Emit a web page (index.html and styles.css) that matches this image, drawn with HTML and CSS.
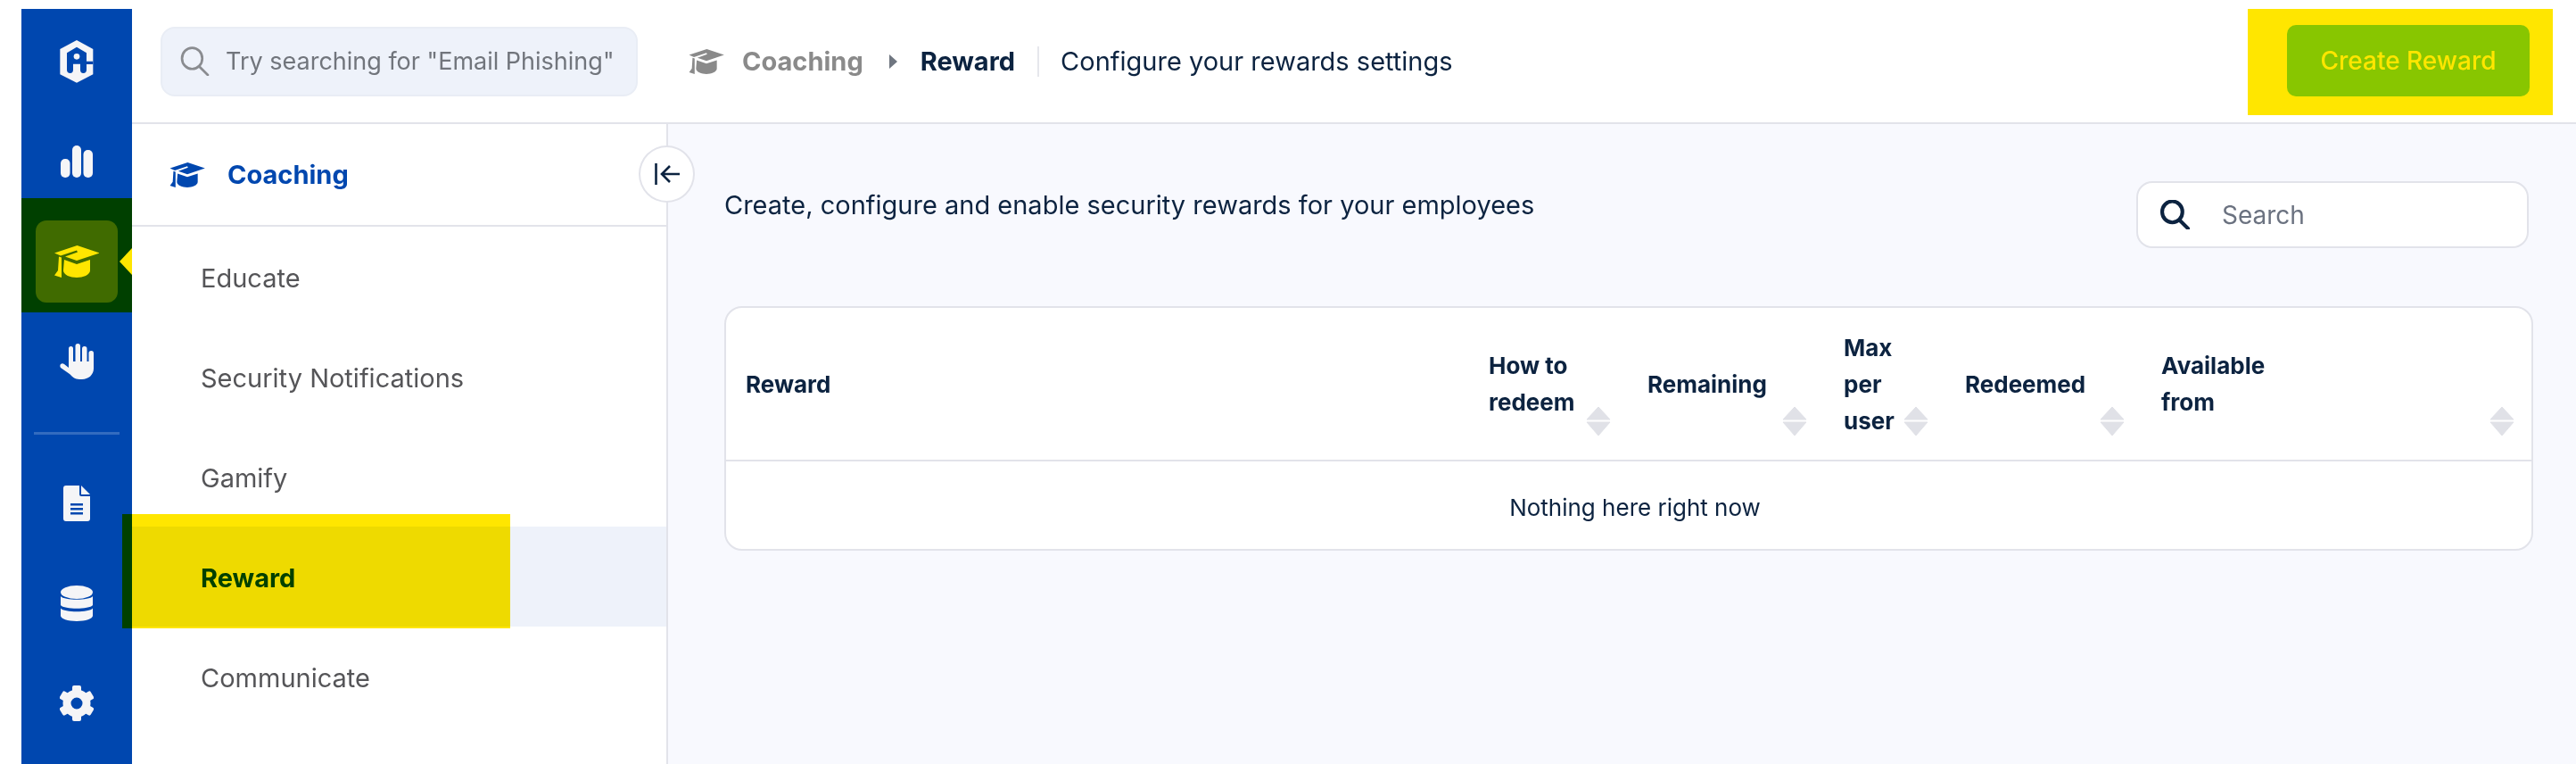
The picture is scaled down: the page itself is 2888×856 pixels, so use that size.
FILE: index.html
```html
<!DOCTYPE html>
<html lang="en">
<head>
    <title>Coaching - Reward</title>
    <link rel="stylesheet" href="styles.css">
</head>
<body>
    <svg class="sprites" width="0" height="0">
        <symbol id="cap" viewBox="0 0 50 36">
            <path d="M25.5 0 L50.5 8.5 L25 17 L12 12.5 L26 7.5 L25 5.5 L7 11.5 L0 8.5Z"/>
            <path d="M11 16 L25 21 L40 16 V28 C40 33 32 36 25 36 C18 36 10 33 10 28Z"/>
            <path d="M5 12.5 L8 13.5 V36 L0 33.5 L4 28Z"/>
        </symbol>
        <symbol id="magnifier" viewBox="0 0 32 32">
            <ellipse cx="13" cy="13" rx="11" ry="11.5" fill="none" stroke="currentColor" stroke-width="inherit"/>
            <line x1="21" y1="22" x2="30" y2="31" stroke="currentColor" stroke-width="inherit" stroke-linecap="round"/>
        </symbol>
    </svg>

    <nav class="rail">
        <a class="rail-item">
            <svg class="icon-logo" viewBox="197 135 112 144">
                <path fill="#f5f5f7" d="M253 135 L308 165 V250 L253 278 L197 250 V165Z"/>
                <path fill="#0047af" d="M220 178 L253 158 L286 178 V206 H308 V216 H286 V235 Q286 246 275 246 Q265 246 265 235 V215 H241 V235 Q241 246 231 246 Q220 246 220 235Z"/>
                <circle fill="#f5f5f7" cx="253" cy="190" r="10"/>
            </svg>
        </a>
        <a class="rail-item">
            <svg class="icon-chart" viewBox="0 0 36 36">
                <rect x="0" y="15" width="10.5" height="21" rx="5"/>
                <rect x="13" y="0" width="10" height="36" rx="5"/>
                <rect x="25.5" y="5" width="10.5" height="31" rx="5"/>
            </svg>
        </a>
        <a class="rail-item rail-item-active">
            <span class="rail-tile"><svg class="icon-cap"><use href="#cap"/></svg></span>
            <span class="rail-arrow"></span>
        </a>
        <a class="rail-item">
            <svg class="icon-hand" viewBox="0 0 38 40">
                <rect x="10" y="3" width="5" height="24" rx="2.5"/>
                <rect x="17.5" y="0" width="5.5" height="24" rx="2.7"/>
                <rect x="25" y="3" width="5.5" height="22" rx="2.7"/>
                <rect x="32.5" y="8" width="5.5" height="20" rx="2.7"/>
                <path d="M10 20 H38 V28 C38 35 32 40 25 40 H22 C17 40 14 37 11 34 L1 27 C-1 24 2 21 5 23 L10 27Z"/>
            </svg>
        </a>
        <div class="rail-divider"></div>
        <a class="rail-item">
            <svg class="icon-doc" viewBox="0 0 30 40">
                <path d="M3 0 H18 V10 a2 2 0 0 0 2 2 H30 V37 a3 3 0 0 1 -3 3 H3 a3 3 0 0 1 -3 -3 V3 a3 3 0 0 1 3 -3Z"/>
                <path d="M20 0 L30 10 H20Z"/>
                <rect class="cut" x="8" y="20" width="14" height="2.5"/>
                <rect class="cut" x="8" y="25" width="14" height="2.5"/>
                <rect class="cut" x="8" y="30" width="14" height="2.5"/>
            </svg>
        </a>
        <a class="rail-item">
            <svg class="icon-db" viewBox="0 0 36 40">
                <ellipse cx="18" cy="7.5" rx="18" ry="7.5"/>
                <path d="M0 12 C4 17 32 17 36 12 V22 C32 27 4 27 0 22Z"/>
                <path d="M0 25.5 C4 30.5 32 30.5 36 25.5 V34 C36 37 28 40 18 40 C8 40 0 37 0 34Z"/>
            </svg>
        </a>
        <a class="rail-item">
            <svg class="icon-gear" viewBox="0 0 38 40">
                <circle cx="19" cy="20" r="11" fill="none" stroke="#f5f5f7" stroke-width="9"/>
                <rect x="14" y="0" width="10" height="9" rx="2"/>
                <rect x="14" y="0" width="10" height="9" rx="2" transform="rotate(60 19 20)"/>
                <rect x="14" y="0" width="10" height="9" rx="2" transform="rotate(120 19 20)"/>
                <rect x="14" y="0" width="10" height="9" rx="2" transform="rotate(180 19 20)"/>
                <rect x="14" y="0" width="10" height="9" rx="2" transform="rotate(240 19 20)"/>
                <rect x="14" y="0" width="10" height="9" rx="2" transform="rotate(300 19 20)"/>
            </svg>
        </a>
    </nav>

    <div class="page">
        <header class="topbar">
            <div class="global-search">
                <svg class="search-icon-light"><use href="#magnifier"/></svg>
                <span>Try searching for "Email Phishing"</span>
            </div>
            <div class="crumbs">
                <svg class="crumb-cap"><use href="#cap"/></svg>
                <span class="crumb-parent">Coaching</span>
                <svg class="crumb-arrow" viewBox="0 0 10 16"><path d="M1 0 L10 8 L1 16Z"/></svg>
                <span class="crumb-current">Reward</span>
                <span class="crumb-desc">Configure your rewards settings</span>
            </div>
            <div class="create-mark">
                <button class="create-btn">Create Reward</button>
            </div>
        </header>

        <div class="body-row">
            <aside class="sidebar">
                <div class="sidebar-title">
                    <svg class="sidebar-cap"><use href="#cap"/></svg>
                    <span>Coaching</span>
                </div>
                <a class="side-link">Educate</a>
                <a class="side-link">Security Notifications</a>
                <a class="side-link">Gamify</a>
                <a class="side-link side-link-active">Reward</a>
                <a class="side-link">Communicate</a>
                <button class="collapse-btn">
                    <svg viewBox="0 0 28 24"><path d="M1.5 0 V24 M28 12 H9 M17 3 L8 12 L17 21" fill="none" stroke="#0c2340" stroke-width="2.6"/></svg>
                </button>
            </aside>

            <main class="content">
                <div class="content-top">
                    <p class="content-desc">Create, configure and enable security rewards for your employees</p>
                    <div class="table-search">
                        <svg class="search-icon-dark"><use href="#magnifier"/></svg>
                        <span>Search</span>
                    </div>
                </div>

                <div class="card">
                    <table class="rewards">
                        <colgroup>
                            <col class="col-reward">
                            <col class="col-redeem">
                            <col class="col-remaining">
                            <col class="col-max">
                            <col class="col-redeemed">
                            <col>
                        </colgroup>
                        <thead>
                            <tr>
                                <th><div class="th-in"><span>Reward</span></div></th>
                                <th><div class="th-in"><span>How to redeem</span><svg class="sort"><use href="#sort"/></svg></div></th>
                                <th><div class="th-in"><span>Remaining</span><svg class="sort"><use href="#sort"/></svg></div></th>
                                <th><div class="th-in"><span>Max per user</span><svg class="sort"><use href="#sort"/></svg></div></th>
                                <th><div class="th-in"><span>Redeemed</span><svg class="sort"><use href="#sort"/></svg></div></th>
                                <th><div class="th-in"><span class="th-narrow">Available from</span><svg class="sort sort-on"><use href="#sort"/></svg></div></th>
                            </tr>
                        </thead>
                        <tbody>
                            <tr><td colspan="6">Nothing here right now</td></tr>
                        </tbody>
                    </table>
                </div>
            </main>
        </div>
    </div>

    <svg class="sprites" width="0" height="0">
        <symbol id="sort" viewBox="0 0 28 34">
            <path class="sort-up" d="M14 1 L27 15 H1Z" stroke-linejoin="round" stroke-width="1"/>
            <path class="sort-down" d="M1 18 H27 L14 33Z" stroke-linejoin="round" stroke-width="1"/>
        </symbol>
    </svg>

    <div class="mark mark-rail"></div>
    <div class="mark mark-side"></div>
</body>
</html>
```

FILE: styles.css
```css
* {
    box-sizing: border-box;
}
body {
    margin: 0;
    height: 856px;
    overflow: hidden;
    display: flex;
    background-color: white;
    font-family: "Inter", "Liberation Sans", sans-serif;
    font-size: 28px;
    color: #0c2340;
}
.sprites {
    position: absolute;
}

/* left rail */
.rail {
    width: 124px;
    margin: 10px 0 0 24px;
    padding-top: 3px;
    background-color: #0047af;
    display: flex;
    flex-direction: column;
    flex-shrink: 0;
}
.rail-item {
    height: 112px;
    display: flex;
    justify-content: center;
    align-items: center;
    position: relative;
    flex-shrink: 0;
}
.rail-item svg {
    fill: #f5f5f7;
}
.rail-item .cut {
    fill: #0047af;
}
.rail-tile {
    width: 92px;
    height: 92px;
    border-radius: 12px;
    background-color: #4076c4;
    display: flex;
    justify-content: center;
    align-items: center;
}
.rail-arrow {
    position: absolute;
    right: 0;
    top: 41px;
    border-top: 15px solid transparent;
    border-bottom: 15px solid transparent;
    border-right: 14px solid white;
}
.rail-divider {
    height: 3px;
    margin: 23px 14px 21px 14px;
    background-color: rgba(255, 255, 255, 0.2);
}
.icon-logo { width: 38px; height: 48px; }
.icon-chart { width: 36px; height: 36px; }
.rail-item .icon-cap { width: 50px; height: 36px; fill: white; }
.icon-hand { width: 38px; height: 40px; }
.icon-doc { width: 30px; height: 40px; }
.icon-db { width: 36px; height: 40px; }
.icon-gear { width: 38px; height: 40px; }

.page {
    flex: 1;
    min-width: 0;
    display: flex;
    flex-direction: column;
}

/* top bar */
.topbar {
    height: 139px;
    border-bottom: 2px solid #e2e3ea;
    display: flex;
    align-items: center;
    padding-left: 32px;
    flex-shrink: 0;
}
.global-search {
    width: 535px;
    height: 78px;
    background-color: #eef2fa;
    border: 2px solid #e9edf5;
    border-radius: 16px;
    display: flex;
    align-items: center;
    padding-left: 20px;
    color: #71757c;
    font-size: 27px;
}
.search-icon-light {
    width: 33px;
    height: 33px;
    margin-right: 18px;
    color: #8a8c90;
    stroke-width: 2.6px;
}
.crumbs {
    display: flex;
    align-items: center;
    margin-left: 57px;
    font-size: 29px;
}
.crumb-cap {
    width: 40px;
    height: 28px;
    fill: #8a8a8a;
    margin-right: 20px;
}
.crumb-parent {
    color: #8a8a8a;
    font-weight: 700;
}
.crumb-arrow {
    width: 10px;
    height: 16px;
    fill: #6f7680;
    margin: 0 26px 0 28px;
}
.crumb-current {
    font-weight: 700;
    padding-right: 25px;
    border-right: 2px solid #e6e7ec;
    line-height: 34px;
}
.crumb-desc {
    margin-left: 24px;
}
.create-mark {
    margin-left: auto;
    margin-right: 26px;
    align-self: flex-start;
    margin-top: 10px;
    padding: 18px 26px 21px 44px;
    background-color: #ffe600;
}
.create-btn {
    display: block;
    width: 272px;
    height: 80px;
    border: none;
    border-radius: 10px;
    background-color: #88c600;
    color: #ffe600;
    font-family: inherit;
    font-size: 28px;
    font-weight: 500;
}

.body-row {
    flex: 1;
    display: flex;
    min-height: 0;
}

/* second sidebar */
.sidebar {
    width: 601px;
    border-right: 2px solid #e2e3ea;
    position: relative;
    flex-shrink: 0;
}
.sidebar-title {
    height: 115px;
    border-bottom: 2px solid #e2e3ea;
    display: flex;
    align-items: center;
    padding-left: 42px;
    color: #0047af;
    font-weight: 700;
    font-size: 29px;
}
.sidebar-cap {
    width: 40px;
    height: 28px;
    fill: #0047af;
    margin-right: 25px;
}
.side-link {
    display: block;
    height: 112px;
    line-height: 116px;
    padding-left: 77px;
    color: #555558;
    font-size: 29px;
}
.side-link-active {
    background-color: #eef2fa;
    color: #0047af;
    font-weight: 700;
}
.collapse-btn {
    position: absolute;
    right: -32px;
    top: 24px;
    width: 63px;
    height: 64px;
    padding: 0;
    border: 2px solid #e2e3ea;
    border-radius: 50%;
    background-color: white;
    display: flex;
    justify-content: center;
    align-items: center;
}
.collapse-btn svg {
    width: 28px;
    height: 24px;
}

/* content */
.content {
    flex: 1;
    min-width: 0;
    background-color: #f8f9fe;
    padding: 64px 48px 0 63px;
}
.content-top {
    display: flex;
    justify-content: space-between;
    align-items: flex-start;
}
.content-desc {
    margin: 7px 0 0 0;
    font-size: 29px;
    line-height: 40px;
}
.table-search {
    width: 440px;
    height: 75px;
    margin-right: 5px;
    background-color: white;
    border: 2px solid #e2e3ea;
    border-radius: 18px;
    display: flex;
    align-items: center;
    padding-left: 25px;
    color: #6b7280;
    font-size: 28px;
}
.search-icon-dark {
    width: 33px;
    height: 33px;
    margin-right: 36px;
    color: #0c2340;
    stroke-width: 4px;
}
.card {
    margin-top: 65px;
    height: 274px;
    background-color: white;
    border: 2px solid #e2e3ea;
    border-radius: 20px;
    overflow: hidden;
}
.rewards {
    width: 100%;
    table-layout: fixed;
    border-collapse: collapse;
}
.col-reward { width: 833px; }
.col-redeem { width: 178px; }
.col-remaining { width: 220px; }
.col-max { width: 136px; }
.col-redeemed { width: 220px; }
.rewards th {
    height: 170px;
    padding: 0;
    border-bottom: 2px solid #e2e3ea;
    text-align: left;
    font-size: 26px;
    font-weight: 700;
    line-height: 41px;
}
.th-in {
    height: 170px;
    padding: 0 19px 26px 22px;
    display: flex;
    justify-content: space-between;
    align-items: flex-end;
    position: relative;
}
.th-in span {
    align-self: center;
    margin-top: 26px;
}
.th-narrow {
    width: 140px;
}
.sort {
    width: 28px;
    height: 34px;
    flex-shrink: 0;
    fill: #e0e1e7;
    stroke: #e0e1e7;
}
.sort-on .sort-down {
    fill: #3b8ee8;
    stroke: #3b8ee8;
}
.rewards td {
    height: 100px;
    padding: 4px 0 0 14px;
    text-align: center;
    font-size: 26px;
}

/* yellow annotation boxes laid over the page */
.mark {
    position: absolute;
    background-color: #ffe600;
    mix-blend-mode: multiply;
}
.mark-rail {
    left: 24px;
    top: 222px;
    width: 124px;
    height: 128px;
}
.mark-side {
    left: 137px;
    top: 576px;
    width: 435px;
    height: 128px;
}
```
